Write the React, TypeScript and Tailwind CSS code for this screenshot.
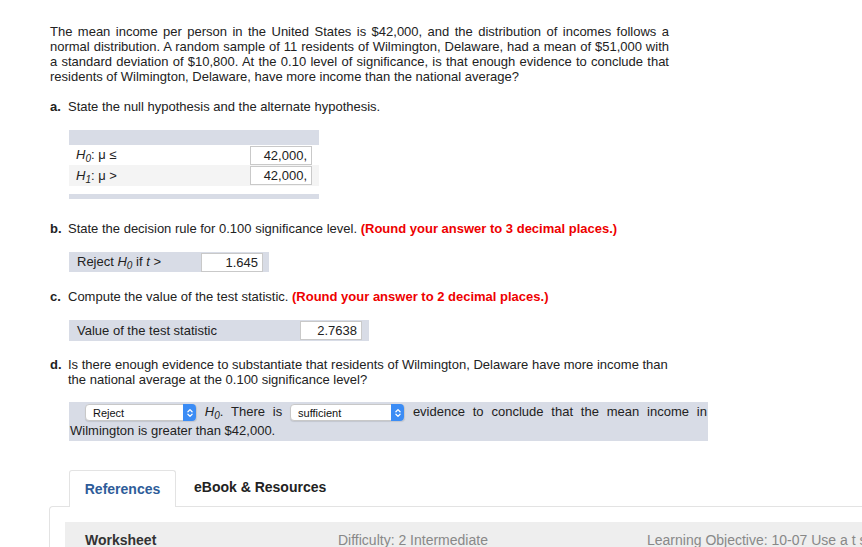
import { ChevronsUpDown } from "lucide-react";

const font = { fontFamily: '"Liberation Sans", Arial, sans-serif' };

const Sub = ({ h, n }: { h: string; n: string }) => (
  <span className="italic">
    {h}
    <span className="relative top-[3px] text-[10px]">{n}</span>
  </span>
);

const FakeSelect = ({ value, width }: { value: string; width: string }) => (
  <span
    className={`inline-flex h-[17px] ${width} items-center justify-between rounded-[4px] border border-[#c8c8c8] bg-white pl-[7px] align-middle text-[11px] text-[#111] shadow-[0_1px_1px_rgba(0,0,0,0.1)]`}
  >
    <span>{value}</span>
    <span className="flex h-[17px] w-[13px] items-center justify-center rounded-r-[4px] bg-[#3b8cf5] text-white">
      <ChevronsUpDown size={10} strokeWidth={3} />
    </span>
  </span>
);

const AnswerBox = ({ value, w }: { value: string; w: string }) => (
  <div
    className={`flex h-[19px] ${w} items-center justify-end border border-[#c9c9c9] bg-white pr-[4px] text-[13px] text-[#222]`}
  >
    {value}
  </div>
);

export default function App() {
  return (
    <div className="h-[547px] w-[862px] overflow-hidden bg-white text-[13px] leading-[15px] text-[#222]" style={font}>
      <div className="pl-[50px] pt-[24px]">
        <p className="w-[619px] text-justify">
          The mean income per person in the United States is $42,000, and the distribution of incomes follows a normal
          distribution. A random sample of 11 residents of Wilmington, Delaware, had a mean of $51,000 with a standard
          deviation of $10,800. At the 0.10 level of significance, is that enough evidence to conclude that residents of
          Wilmington, Delaware, have more income than the national average?
        </p>

        {/* a */}
        <div className="mt-[15px] flex">
          <span className="w-[18px] font-bold">a.</span>
          <span>State the null hypothesis and the alternate hypothesis.</span>
        </div>
        <div className="ml-[19px] mt-[16px] w-[250px]">
          <div className="h-[15px] bg-[#d8dce6]" />
          <div className="flex h-[20px] items-center justify-between bg-white pl-[7px] pr-[7px]">
            <span>
              <Sub h="H" n="0" />: μ ≤
            </span>
            <AnswerBox value="42,000," w="w-[62px]" />
          </div>
          <div className="flex h-[21px] items-center justify-between bg-[#f4f4f4] pl-[7px] pr-[7px]">
            <span>
              <Sub h="H" n="1" />: μ &gt;
            </span>
            <AnswerBox value="42,000," w="w-[62px]" />
          </div>
          <div className="mt-[8px] h-[5px] bg-[#d8dce6]" />
        </div>

        {/* b */}
        <div className="mt-[22px] flex">
          <span className="w-[18px] font-bold">b.</span>
          <span>
            State the decision rule for 0.100 significance level.{" "}
            <span className="font-bold text-[#ee0000]">(Round your answer to 3 decimal places.)</span>
          </span>
        </div>
        <div className="ml-[19px] mt-[16px] flex h-[20px] w-[200px] items-center justify-between bg-[#d8dce6] pl-[8px] pr-[6px]">
          <span>
            Reject <Sub h="H" n="0" /> if <span className="italic">t</span> &gt;
          </span>
          <AnswerBox value="1.645" w="w-[62px]" />
        </div>

        {/* c */}
        <div className="mt-[17px] flex">
          <span className="w-[18px] font-bold">c.</span>
          <span>
            Compute the value of the test statistic.{" "}
            <span className="font-bold text-[#ee0000]">(Round your answer to 2 decimal places.)</span>
          </span>
        </div>
        <div className="ml-[19px] mt-[16px] flex h-[21px] w-[300px] items-center justify-between bg-[#d8dce6] pl-[8px] pr-[7px]">
          <span>Value of the test statistic</span>
          <AnswerBox value="2.7638" w="w-[62px]" />
        </div>

        {/* d */}
        <div className="mt-[16px] flex">
          <span className="w-[18px] font-bold">d.</span>
          <span className="w-[610px]">
            Is there enough evidence to substantiate that residents of Wilmington, Delaware have more income than the
            national average at the 0.100 significance level?
          </span>
        </div>
        <div className="ml-[19px] mt-[15px] w-[639px] bg-[#d8dce6] p-[1px] text-justify leading-[18px]">
          <span className="ml-[15px]" />
          <FakeSelect value="Reject" width="w-[112px]" /> <Sub h="H" n="0" />. There is{" "}
          <FakeSelect value="sufficient" width="w-[115px]" /> evidence to conclude that the mean income in Wilmington is
          greater than $42,000.
        </div>
      </div>

      {/* tabs */}
      <div className="mt-[28px] pl-[49px]">
        <div className="flex items-end pl-[20px]">
          <div className="relative z-10 -mb-px flex h-[37px] w-[107px] items-center justify-center rounded-t-[3px] border border-b-0 border-[#e3e3e3] bg-white text-[14px] font-bold text-[#2e5c99]">
            References
          </div>
          <div className="flex h-[37px] items-center pl-[18px] text-[14px] font-bold text-[#222]">eBook &amp; Resources</div>
        </div>
        <div className="rounded-tl-[4px] border-l border-t border-[#e3e3e3] pl-[15px] pt-[15px]">
          <div className="flex h-[36px] items-center overflow-hidden whitespace-nowrap bg-[#eeeeee] pl-[20px] text-[14px] text-[#888]">
            <span className="w-[253px] shrink-0 font-bold text-[#333]">Worksheet</span>
            <span className="w-[309px] shrink-0">Difficulty: 2 Intermediate</span>
            <span className="shrink-0">Learning Objective: 10-07 Use a t statistic to test a hypothesis</span>
          </div>
        </div>
      </div>
    </div>
  );
}
